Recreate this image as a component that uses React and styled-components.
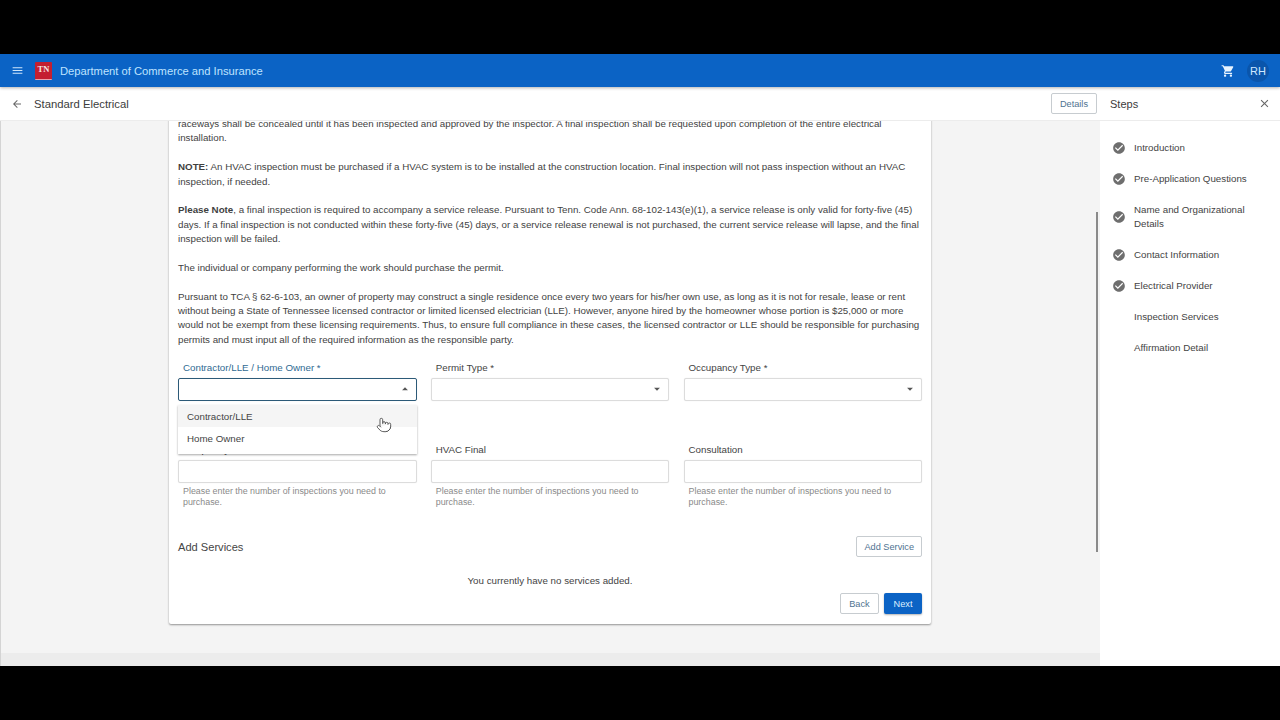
import React from "react";
import styled, { createGlobalStyle } from "styled-components";
import { MdMenu, MdArrowBack, MdClose, MdCheckCircle, MdArrowDropDown, MdArrowDropUp, MdShoppingCart } from "react-icons/md";
import { Pointer } from "lucide-react";

const Global = createGlobalStyle`
  html, body { margin: 0; padding: 0; background: #000; }
  * { box-sizing: border-box; }
  body { font-family: "Liberation Sans", Arial, sans-serif; color: #3a3a3a; }
`;
const Page = styled.div`
  width: 1280px; height: 720px; padding: 54px 0; background: #000; overflow: hidden;
`;
const Frame = styled.div`
  height: 612px; display: flex; flex-direction: column; background: #fff; position: relative;
`;
const TopBar = styled.header`
  height: 33px; flex: none; display: flex; align-items: center; background: #0b63c5; color: #fff;
  padding: 0 11px; box-shadow: 0 1px 3px rgba(0,0,0,.3); position: relative; z-index: 3;
`;
const MenuButton = styled.span`
  display: flex; color: #cfe6fb; font-size: 13px; width: 24px;
`;
const Logo = styled.span`
  width: 17px; height: 18px; background: #c41f30; color: #f3e4e4; font: bold 8.5px "Liberation Serif", serif;
  display: flex; align-items: center; justify-content: center; border-bottom: 1.5px solid #e9a3ab; border-radius: 1px;
  margin-right: 8px; padding-bottom: 2px;
`;
const AgencyName = styled.span`
  font-size: 11.2px; color: #bfe3ff; flex: 1;
`;
const Cart = styled.span`
  display: flex; color: #e8f4ff; font-size: 14px; margin-right: 12px;
`;
const Avatar = styled.span`
  width: 22px; height: 22px; border-radius: 50%; background: #0a55ab; color: #cfe8ff;
  font-size: 11px; display: flex; align-items: center; justify-content: center;
`;
const Body = styled.div`
  flex: 1; min-height: 0; display: flex;
`;
const Main = styled.div`
  width: 1100px; display: flex; flex-direction: column; min-height: 0; background: #f4f4f4; position: relative;
  border-left: 1px solid #d4d4d4;
`;
const SubBar = styled.div`
  height: 34px; flex: none; background: #fff; display: flex; align-items: center; padding: 0 3px 0 11px;
  border-bottom: 1px solid #ececec; margin-left: -1px;
`;
const BackIcon = styled.span`
  display: flex; font-size: 12px; color: #666; width: 23px;
`;
const PageTitle = styled.span`
  font-size: 11.3px; color: #3c3c3c; flex: 1;
`;
const OutlineButton = styled.button`
  height: 21px; padding: 0 ${p => p.$pad || 8}px; border: 1px solid #c7ccd0; border-radius: 2px; background: #fff;
  font: 9.2px "Liberation Sans", sans-serif; color: #4f7391;
`;
const Scroll = styled.div`
  flex: 1; min-height: 0; overflow: hidden; display: flex; flex-direction: column; justify-content: flex-end;
  align-items: flex-start; padding: 0 0 42px 168px;
`;
const Card = styled.section`
  width: 762px; flex: none; background: #fff; padding: 0 9px 10px; border-radius: 2px;
  box-shadow: 0 1px 2px rgba(0,0,0,.4);
`;
const Para = styled.p`
  margin: 0 0 14.4px; font-size: 9.75px; line-height: 14.37px; color: #3f3f3f;
`;
const FieldGrid = styled.div`
  display: grid; grid-template-columns: repeat(3, 238.5px); column-gap: 14.25px;
`;
const Field = styled.div`
  position: relative; height: ${p => p.$h}px;
`;
const Label = styled.div`
  font-size: 9.75px; line-height: 12px; height: 16px; padding-left: 5px;
  color: ${p => (p.$active ? "#2f6a92" : "#444")};
`;
const Box = styled.div`
  height: 23px; background: #fff; border-radius: 2px; display: flex; align-items: center; justify-content: flex-end;
  padding-right: 4px; font-size: 14px; color: #555; box-shadow: 0 0 1px rgba(0,0,0,.12);
  border: 1px solid ${p => (p.$active ? "#2c5a78" : "#dcdcdc")};
`;
const Help = styled.div`
  font-size: 8.9px; line-height: 11.3px; color: #8a8a8a; padding: 3px 5px 0;
`;
const DropMenu = styled.div`
  position: absolute; left: 0; right: 0; top: 43.5px; height: 49px; background: #fff; z-index: 2;
  box-shadow: 0 1px 2px rgba(0,0,0,.35);
`;
const DropItem = styled.div`
  height: 22px; display: flex; align-items: center; padding-left: 9px; font-size: 9.75px; color: #444;
  background: ${p => (p.$hover ? "#f5f5f5" : "#fff")};
`;
const HandCursor = styled.span`
  position: absolute; left: 198px; top: 12px; display: flex; color: #444;
`;
const ServicesHead = styled.div`
  display: flex; align-items: center; justify-content: space-between; margin-top: 16.5px; height: 21px;
`;
const ServicesTitle = styled.span`
  font-size: 11.1px; color: #444;
`;
const Empty = styled.div`
  text-align: center; font-size: 9.75px; color: #444; margin-top: 18px; line-height: 12px;
`;
const Actions = styled.div`
  display: flex; justify-content: flex-end; gap: 5px; padding-top: 6px;
`;
const PrimaryButton = styled.button`
  height: 21px; padding: 0 9.5px; border: 0; border-radius: 2px; background: #0b63c5; color: #dff0ff;
  font: 9.2px "Liberation Sans", sans-serif; box-shadow: 0 1px 2px rgba(0,0,0,.3);
`;
const ScrollThumb = styled.div`
  position: absolute; left: 1095px; top: 125px; width: 2px; height: 340px; background: #8a8a8a;
`;
const FootStrip = styled.div`
  position: absolute; left: 0; right: 0; bottom: 0; height: 13px; background: #ececec;
`;
const Steps = styled.aside`
  width: 180px; flex: none; background: #fff; display: flex; flex-direction: column;
`;
const StepsHead = styled.div`
  height: 34px; flex: none; display: flex; align-items: center; justify-content: space-between; padding: 0 9px 0 10px;
  border-bottom: 1px solid #ececec; font-size: 11px; color: #3c3c3c;
`;
const CloseIcon = styled.span`
  display: flex; font-size: 13px; color: #666;
`;
const StepList = styled.ol`
  list-style: none; margin: 0; padding: 11.5px 20px 0 12px;
`;
const Step = styled.li`
  display: flex; align-items: center; padding: 8.5px 0; font-size: 9.75px; line-height: 14px; color: #444;
`;
const StepIcon = styled.span`
  width: 22px; flex: none; display: flex; color: #6e6e6e; font-size: 14px;
`;

const steps = [
  ["Introduction", true],
  ["Pre-Application Questions", true],
  ["Name and Organizational Details", true],
  ["Contact Information", true],
  ["Electrical Provider", true],
  ["Inspection Services", false],
  ["Affirmation Detail", false],
];
const help = "Please enter the number of inspections you need to purchase.";

export default function App() {
  return (
    <Page>
      <Global />
      <Frame>
        <TopBar>
          <MenuButton><MdMenu /></MenuButton>
          <Logo>TN</Logo>
          <AgencyName>Department of Commerce and Insurance</AgencyName>
          <Cart><MdShoppingCart /></Cart>
          <Avatar>RH</Avatar>
        </TopBar>
        <Body>
          <Main>
            <SubBar>
              <BackIcon><MdArrowBack /></BackIcon>
              <PageTitle>Standard Electrical</PageTitle>
              <OutlineButton>Details</OutlineButton>
            </SubBar>
            <Scroll>
              <Card>
                <Para>raceways shall be concealed until it has been inspected and approved by the inspector. A final inspection shall be requested upon completion of the entire electrical installation.</Para>
                <Para><b>NOTE:</b> An HVAC inspection must be purchased if a HVAC system is to be installed at the construction location. Final inspection will not pass inspection without an HVAC inspection, if needed.</Para>
                <Para><b>Please Note</b>, a final inspection is required to accompany a service release. Pursuant to Tenn. Code Ann. 68-102-143(e)(1), a service release is only valid for forty-five (45) days. If a final inspection is not conducted within these forty-five (45) days, or a service release renewal is not purchased, the current service release will lapse, and the final inspection will be failed.</Para>
                <Para>The individual or company performing the work should purchase the permit.</Para>
                <Para>Pursuant to TCA § 62-6-103, an owner of property may construct a single residence once every two years for his/her own use, as long as it is not for resale, lease or rent without being a State of Tennessee licensed contractor or limited licensed electrician (LLE). However, anyone hired by the homeowner whose portion is $25,000 or more would not be exempt from these licensing requirements. Thus, to ensure full compliance in these cases, the licensed contractor or LLE should be responsible for purchasing permits and must input all of the required information as the responsible party.</Para>
                <FieldGrid>
                  <Field $h={82}>
                    <Label $active>Contractor/LLE / Home Owner *</Label>
                    <Box $active><MdArrowDropUp /></Box>
                    <DropMenu>
                      <DropItem $hover>Contractor/LLE</DropItem>
                      <DropItem>Home Owner</DropItem>
                      <HandCursor><Pointer size={16} fill="#fff" strokeWidth={1.3} /></HandCursor>
                    </DropMenu>
                  </Field>
                  <Field $h={82}>
                    <Label>Permit Type *</Label>
                    <Box><MdArrowDropDown /></Box>
                  </Field>
                  <Field $h={82}>
                    <Label>Occupancy Type *</Label>
                    <Box><MdArrowDropDown /></Box>
                  </Field>
                  <Field $h={76}>
                    <Label>Temporary</Label>
                    <Box />
                    <Help>{help}</Help>
                  </Field>
                  <Field $h={76}>
                    <Label>HVAC Final</Label>
                    <Box />
                    <Help>{help}</Help>
                  </Field>
                  <Field $h={76}>
                    <Label>Consultation</Label>
                    <Box />
                    <Help>{help}</Help>
                  </Field>
                </FieldGrid>
                <ServicesHead>
                  <ServicesTitle>Add Services</ServicesTitle>
                  <OutlineButton $pad={7}>Add Service</OutlineButton>
                </ServicesHead>
                <Empty>You currently have no services added.</Empty>
                <Actions>
                  <OutlineButton $pad={8.5}>Back</OutlineButton>
                  <PrimaryButton>Next</PrimaryButton>
                </Actions>
              </Card>
            </Scroll>
            <ScrollThumb />
            <FootStrip />
          </Main>
          <Steps>
            <StepsHead>
              <span>Steps</span>
              <CloseIcon><MdClose /></CloseIcon>
            </StepsHead>
            <StepList>
              {steps.map(([name, done]) => (
                <Step key={name}>
                  <StepIcon>{done && <MdCheckCircle />}</StepIcon>
                  <span>{name}</span>
                </Step>
              ))}
            </StepList>
          </Steps>
        </Body>
      </Frame>
    </Page>
  );
}
